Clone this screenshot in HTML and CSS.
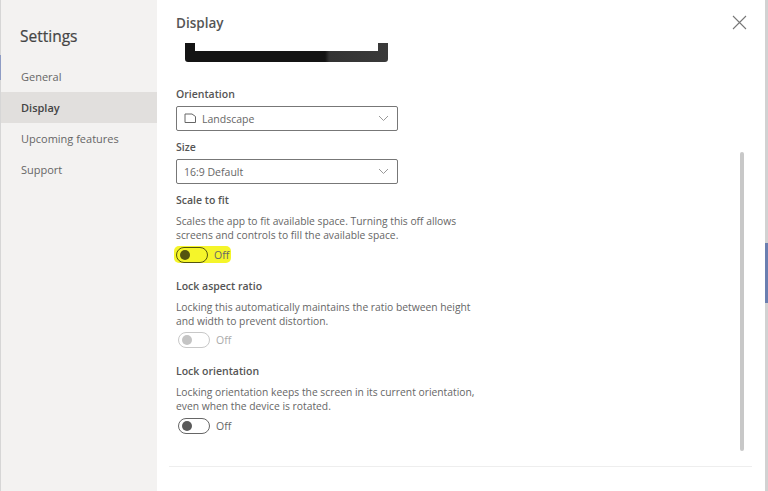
FILE: index.html
```html
<!DOCTYPE html>
<html lang="en">
<head>
  <meta charset="UTF-8" />
  <meta name="viewport" content="width=device-width, initial-scale=1.0" />
  <title>Settings</title>
  <link rel="stylesheet" href="styles.css">
</head>
<body>
  <div class="window">
    <div class="edge-left"><span class="edge-mark"></span></div>

    <div class="sidebar">
      <h1>Settings</h1>
      <div class="nav">
        <div class="nav-item">General</div>
        <div class="nav-item active">Display</div>
        <div class="nav-item">Upcoming features</div>
        <div class="nav-item">Support</div>
      </div>
    </div>

    <div class="panel">
      <div class="panel-head">
        <h2>Display</h2>
        <svg class="close" width="15" height="15" viewBox="0 0 15 15">
          <path d="M1 1 L14 14 M14 1 L1 14" stroke="#777" stroke-width="1.1" fill="none" />
        </svg>
      </div>

      <svg class="preview" width="206" height="20" viewBox="0 0 206 20">
        <defs>
          <linearGradient id="device" x1="0" x2="1" y1="0" y2="0">
            <stop offset="0.69" stop-color="#141414" />
            <stop offset="0.71" stop-color="#333" />
            <stop offset="1" stop-color="#3a3a3a" />
          </linearGradient>
        </defs>
        <path d="M1 0 H11 V8 H194 V0 H204 V16 Q204 19 201 19 H4 Q1 19 1 16 Z" fill="url(#device)" />
      </svg>

      <div class="content">
        <div class="field">
          <label class="label">Orientation</label>
          <div class="select">
            <svg class="select-icon" width="13" height="11" viewBox="0 0 13 11">
              <path d="M1 9.5 V1 H8 L11.5 3.5 V9.5 Z" stroke="#666" fill="none" />
            </svg>
            <span>Landscape</span>
            <svg class="chevron" width="11" height="7" viewBox="0 0 11 7">
              <path d="M1 1 L5.5 5.5 L10 1" stroke="#999" fill="none" />
            </svg>
          </div>
        </div>

        <div class="field">
          <label class="label">Size</label>
          <div class="select">
            <span>16:9 Default</span>
            <svg class="chevron" width="11" height="7" viewBox="0 0 11 7">
              <path d="M1 1 L5.5 5.5 L10 1" stroke="#999" fill="none" />
            </svg>
          </div>
        </div>

        <div class="option">
          <div class="label">Scale to fit</div>
          <p>Scales the app to fit available space. Turning this off allows<br>screens and controls to fill the available space.</p>
          <div class="toggle-row marked">
            <span class="toggle"><span class="knob"></span></span>
            <span class="toggle-text">Off</span>
          </div>
        </div>

        <div class="option">
          <div class="label">Lock aspect ratio</div>
          <p>Locking this automatically maintains the ratio between height<br>and width to prevent distortion.</p>
          <div class="toggle-row disabled">
            <span class="toggle"><span class="knob"></span></span>
            <span class="toggle-text">Off</span>
          </div>
        </div>

        <div class="option">
          <div class="label">Lock orientation</div>
          <p>Locking orientation keeps the screen in its current orientation,<br>even when the device is rotated.</p>
          <div class="toggle-row">
            <span class="toggle"><span class="knob"></span></span>
            <span class="toggle-text">Off</span>
          </div>
        </div>
      </div>

      <div class="panel-foot"></div>
      <div class="scrollbar"></div>
    </div>

    <div class="edge-right"><span class="edge-thumb"></span></div>
  </div>
</body>
</html>
```

FILE: styles.css
```css
html, body {
  margin: 0;
  height: 100%;
  overflow: hidden;
}
body {
  font-family: 'Open Sans', 'Noto Sans', sans-serif;
  color: #555;
  background: #fff;
}
.window {
  display: flex;
  width: 768px;
  height: 491px;
}
.edge-left {
  width: 1px;
  background: #d6d6d6;
  padding-top: 55px;
}
.edge-mark {
  display: block;
  height: 25px;
  background: #8e9cc4;
}
.sidebar {
  width: 156px;
  background: #f3f2f1;
}
.sidebar h1 {
  margin: 26px 0 0 19px;
  font-size: 15.5px;
  line-height: 21px;
  font-weight: 400;
  color: #444;
  -webkit-text-stroke: 0.2px #444;
}
.nav {
  margin-top: 14px;
}
.nav-item {
  height: 31px;
  line-height: 31px;
  padding-left: 20px;
  font-size: 11px;
  color: #666;
}
.nav-item.active {
  background: #e1dfdd;
  color: #444;
  font-weight: 600;
}
.panel {
  position: relative;
  flex: 1;
  padding-left: 19px;
}
.panel-head {
  display: flex;
  justify-content: space-between;
  height: 43px;
  padding-right: 18px;
}
.panel-head h2 {
  margin: 13px 0 0 0;
  font-size: 13.5px;
  line-height: 20px;
  font-weight: 600;
  color: #555;
}
.close {
  margin-top: 15px;
}
.preview {
  display: block;
  margin-left: 8px;
}
.content {
  margin-top: 24px;
}
.label {
  display: block;
  font-size: 10.5px;
  line-height: 15px;
  font-weight: 600;
  color: #555;
}
.field {
  margin-bottom: 9px;
}
.select {
  display: flex;
  align-items: center;
  gap: 5px;
  box-sizing: border-box;
  width: 222px;
  height: 25px;
  margin-top: 4px;
  padding: 0 8px 0 7px;
  border: 1px solid #777;
  border-radius: 2px;
  font-size: 10.5px;
  color: #666;
}
.chevron {
  margin-left: auto;
}
.option {
  margin-bottom: 14px;
}
.option p {
  margin: 6px 0 0 0;
  font-size: 10.3px;
  line-height: 14px;
  color: #666;
}
.toggle-row {
  display: inline-flex;
  align-items: center;
  gap: 6px;
  height: 17px;
  margin-top: 4px;
  padding: 0 2px;
  font-size: 10.5px;
  color: #666;
}
.toggle {
  display: flex;
  align-items: center;
  box-sizing: border-box;
  width: 32px;
  height: 16px;
  padding-left: 3px;
  border: 1px solid #666;
  border-radius: 8px;
}
.knob {
  width: 10px;
  height: 10px;
  border-radius: 50%;
  background: #5a5a5a;
}
.marked {
  background: #f5f52a;
  border-radius: 5px;
  margin-left: -2px;
}
.marked .toggle {
  border-color: #55550f;
}
.marked .knob {
  background: #55550f;
}
.disabled {
  color: #aaa;
}
.disabled .toggle {
  border-color: #c8c8c8;
}
.disabled .knob {
  background: #c4c4c4;
}
.panel-foot {
  position: absolute;
  left: 12px;
  right: 13px;
  top: 466px;
  border-top: 1px solid #eee;
}
.scrollbar {
  position: absolute;
  left: 583px;
  top: 152px;
  width: 4px;
  height: 299px;
  border-radius: 2px;
  background: #c8c8c8;
}
.edge-right {
  width: 3px;
  background: #d2d2d2;
  padding-top: 243px;
}
.edge-thumb {
  display: block;
  height: 60px;
  background: #6b7fb0;
}
```
